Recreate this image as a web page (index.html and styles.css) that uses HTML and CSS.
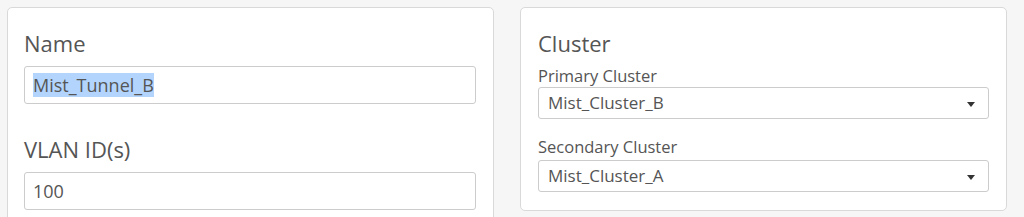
FILE: index.html
```html
<!DOCTYPE html>
<html lang="en">
<head>
  <meta charset="UTF-8">
  <meta name="viewport" content="width=device-width, initial-scale=1.0">
  <title>Tunnel Settings</title>
  <link rel="stylesheet" href="styles.css">
</head>
<body>
  <div class="page">
    <div class="card card-left">
      <div class="title">Name</div>
      <div class="field"><span class="selected">Mist_Tunnel_B</span></div>

      <div class="title title-gap">VLAN ID(s)</div>
      <div class="field">100</div>
    </div>

    <div class="card card-right">
      <div class="title">Cluster</div>

      <div class="label">Primary Cluster</div>
      <div class="select">
        <span>Mist_Cluster_B</span>
        <span class="caret"></span>
      </div>

      <div class="label label-gap">Secondary Cluster</div>
      <div class="select">
        <span>Mist_Cluster_A</span>
        <span class="caret"></span>
      </div>
    </div>
  </div>
</body>
</html>
```

FILE: styles.css
```css
* {
  margin: 0;
  padding: 0;
  box-sizing: border-box;
}

body {
  background: #f6f6f6;
  font-family: 'Open Sans', 'Noto Sans', sans-serif;
  color: #555;
  overflow: hidden;
}

.page {
  display: flex;
  align-items: flex-start;
  gap: 26px;
  padding: 7px;
}

.card {
  width: 487px;
  background: #fff;
  border: 1px solid #d9d9d9;
  border-radius: 5px;
  padding: 20px 17px 18px 16px;
}

.card-left {
  min-height: 240px;
}

.card-right {
  padding-left: 17px;
}

.title {
  font-size: 22px;
  line-height: 30px;
  color: #555;
  margin-bottom: 8px;
}

.title-gap {
  margin-top: 30px;
}

.field {
  height: 38px;
  border: 1px solid #ccc;
  border-radius: 3px;
  padding: 5px 8px;
  font-size: 18px;
  line-height: 26px;
  color: #555;
}

.selected {
  background: #b3d5fd;
}

.label {
  font-size: 16.5px;
  line-height: 22px;
  margin-top: -1px;
}

.label-gap {
  margin-top: 17px;
  margin-bottom: 2px;
}

.select {
  display: flex;
  align-items: center;
  justify-content: space-between;
  height: 32px;
  border: 1px solid #ccc;
  border-radius: 3px;
  padding: 0 13px 0 9px;
  font-size: 17px;
  line-height: 30px;
  color: #555;
}

.caret {
  width: 0;
  height: 0;
  border-left: 4px solid transparent;
  border-right: 4px solid transparent;
  border-top: 5px solid #333;
  margin-top: 2px;
}
```
